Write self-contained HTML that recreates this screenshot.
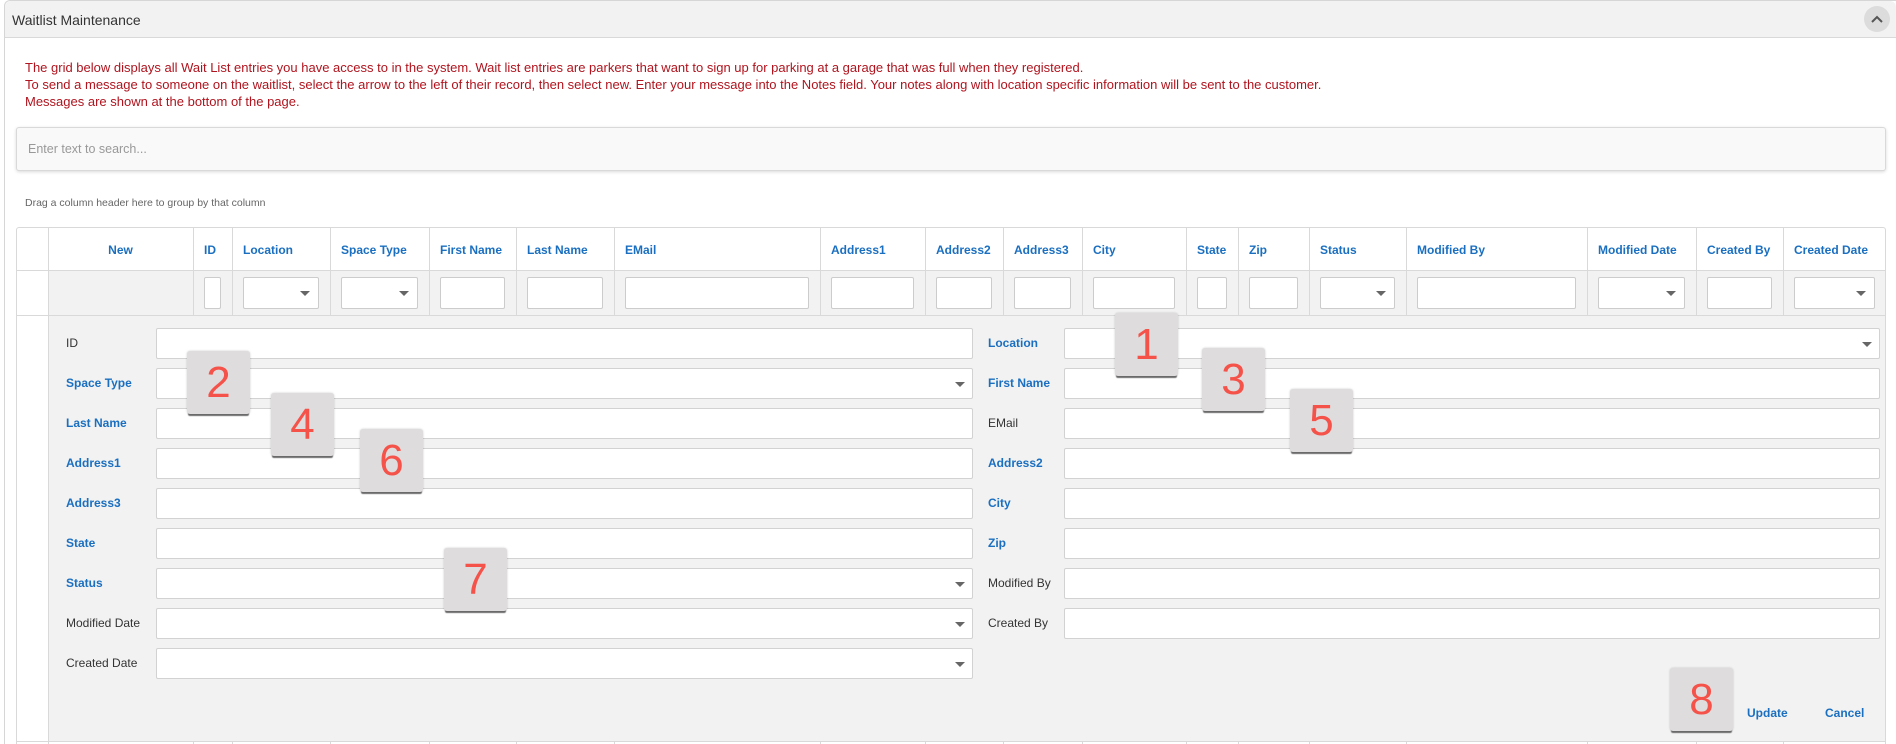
<!DOCTYPE html>
<html style="width:1896px;height:744px;overflow:hidden"><head><meta charset="utf-8">
<style>
*{box-sizing:border-box;margin:0;padding:0}
body{width:1896px;height:744px;overflow:hidden;background:#fff;font-family:"Liberation Sans",sans-serif;position:relative}
.a{position:absolute}
.panel{left:4px;top:0;width:1892px;height:744px;border:1px solid #d6d6d6;border-bottom:none;border-right:none;border-radius:6px 0 0 0}
.hdr{left:5px;top:1px;width:1891px;height:37px;background:#f2f2f2;border-bottom:1px solid #d9d9d9;border-radius:6px 6px 0 0}
.title{left:12px;top:12px;font-size:14px;color:#333}
.circ{left:1864px;top:6px;width:26px;height:26px;border-radius:50%;background:#dcdcdc}
.red{left:25px;font-size:13px;color:#b0141e;white-space:nowrap}
.search{left:16px;top:127px;width:1870px;height:44px;background:#f9f9f9;border:1px solid #d9d9d9;border-radius:3px;box-shadow:0 1px 3px rgba(0,0,0,.15)}
.ph{left:28px;top:142px;font-size:12.5px;color:#999}
.drag{left:25px;top:197px;font-size:10.5px;color:#666}
.grid{left:16px;top:227px;width:1870px;height:517px;border:1px solid #d9d9d9;border-bottom:none;border-radius:3px 3px 0 0}
.vl{width:1px;background:#d9d9d9}
.hl{height:1px;background:#d9d9d9}
.h{top:243px;font-size:12px;font-weight:bold;color:#1a6fc0;white-space:nowrap}
.fi{top:277px;height:32px;background:#fff;border:1px solid #ccc;border-radius:2px}
.arr{width:0;height:0;border-left:5px solid transparent;border-right:5px solid transparent;border-top:5px solid #666}
.inp{height:31px;background:#fff;border:1px solid #d2d2d2;border-radius:2px}
.lb{font-size:12px;white-space:nowrap}
.bl{color:#1a6fc0;font-weight:bold}
.dk{color:#333}
.bd{width:63px;height:63px;background:#dedcdc;border-radius:3px;box-shadow:0 3px 1px -1px #6a6a6a,0 0 2px rgba(0,0,0,.2);color:#f5524a;font-size:44px;text-align:center;line-height:63px}
</style></head><body>
<div class="a panel"></div>
<div class="a hdr"></div>
<div class="a title">Waitlist Maintenance</div>
<div class="a circ"></div>
<svg class="a" style="left:1870px;top:13px" width="14" height="12"><path d="M2 9 L7 4 L12 9" stroke="#555" stroke-width="2" fill="none"/></svg>

<div class="a red" style="top:60px">The grid below displays all Wait List entries you have access to in the system. Wait list entries are parkers that want to sign up for parking at a garage that was full when they registered.</div>
<div class="a red" style="top:77px">To send a message to someone on the waitlist, select the arrow to the left of their record, then select new. Enter your message into the Notes field. Your notes along with location specific information will be sent to the customer.</div>
<div class="a red" style="top:94px">Messages are shown at the bottom of the page.</div>

<div class="a search"></div>
<div class="a ph">Enter text to search...</div>
<div class="a drag">Drag a column header here to group by that column</div>

<div class="a grid"></div>
<div class="a" style="left:49px;top:271px;width:1836px;height:44px;background:#f2f2f2"></div>
<div class="a" style="left:49px;top:315px;width:1836px;height:426px;background:#f2f2f2"></div>
<div class="a hl" style="left:17px;top:270px;width:1868px"></div>
<div class="a hl" style="left:17px;top:315px;width:1868px"></div>
<div class="a hl" style="left:17px;top:741px;width:1868px"></div>
<div class="a vl" style="left:48px;top:228px;height:516px"></div>

<div id="cols"></div>
<script>
var seps=[193,232,330,429,516,614,820,925,1003,1082,1186,1238,1309,1406,1587,1696,1783];
var h='';
seps.forEach(function(x){h+='<div class="a vl" style="left:'+x+'px;top:228px;height:87px"></div><div class="a vl" style="left:'+x+'px;top:742px;height:2px"></div>';});
var all=[48].concat(seps).concat([1886]);
var names=['New','ID','Location','Space Type','First Name','Last Name','EMail','Address1','Address2','Address3','City','State','Zip','Status','Modified By','Modified Date','Created By','Created Date'];
var sel={2:1,3:1,13:1,15:1,17:1};
for(var i=0;i<names.length;i++){
 var l=all[i],r=all[i+1];
 if(i==0){h+='<div class="a h" style="left:'+l+'px;width:'+(r-l)+'px;text-align:center">New</div>';continue;}
 h+='<div class="a h" style="left:'+(l+11)+'px">'+names[i]+'</div>';
 var fl=l+11,fr=r-11;
 h+='<div class="a fi" style="left:'+fl+'px;width:'+(fr-fl)+'px"></div>';
 if(sel[i])h+='<div class="a arr" style="left:'+(fr-19)+'px;top:291px"></div>';
}
var L=[['ID',0,0],['Space Type',1,1],['Last Name',1,0],['Address1',1,0],['Address3',1,0],['State',1,0],['Status',1,1],['Modified Date',0,1],['Created Date',0,1]];
var R=[['Location',1,1],['First Name',1,0],['EMail',0,0],['Address2',1,0],['City',1,0],['Zip',1,0],['Modified By',0,0],['Created By',0,0]];
for(var j=0;j<L.length;j++){
 var t=328+40*j;
 h+='<div class="a lb '+(L[j][1]?'bl':'dk')+'" style="left:66px;top:'+(t+8)+'px">'+L[j][0]+'</div>';
 h+='<div class="a inp" style="left:156px;top:'+t+'px;width:817px"></div>';
 if(L[j][2])h+='<div class="a arr" style="left:955px;top:'+(t+14)+'px"></div>';
}
for(var j=0;j<R.length;j++){
 var t=328+40*j;
 h+='<div class="a lb '+(R[j][1]?'bl':'dk')+'" style="left:988px;top:'+(t+8)+'px">'+R[j][0]+'</div>';
 h+='<div class="a inp" style="left:1064px;top:'+t+'px;width:816px"></div>';
 if(R[j][2])h+='<div class="a arr" style="left:1862px;top:'+(t+14)+'px"></div>';
}
document.getElementById('cols').innerHTML=h;
</script>
<div class="a lb bl" style="left:1747px;top:706px">Update</div>
<div class="a lb bl" style="left:1825px;top:706px">Cancel</div>

<div class="a bd" style="left:1115px;top:313px">1</div>
<div class="a bd" style="left:187px;top:351px">2</div>
<div class="a bd" style="left:1202px;top:348px">3</div>
<div class="a bd" style="left:271px;top:393px">4</div>
<div class="a bd" style="left:1290px;top:389px">5</div>
<div class="a bd" style="left:360px;top:429px">6</div>
<div class="a bd" style="left:444px;top:548px">7</div>
<div class="a bd" style="left:1670px;top:668px">8</div>
</body></html>
